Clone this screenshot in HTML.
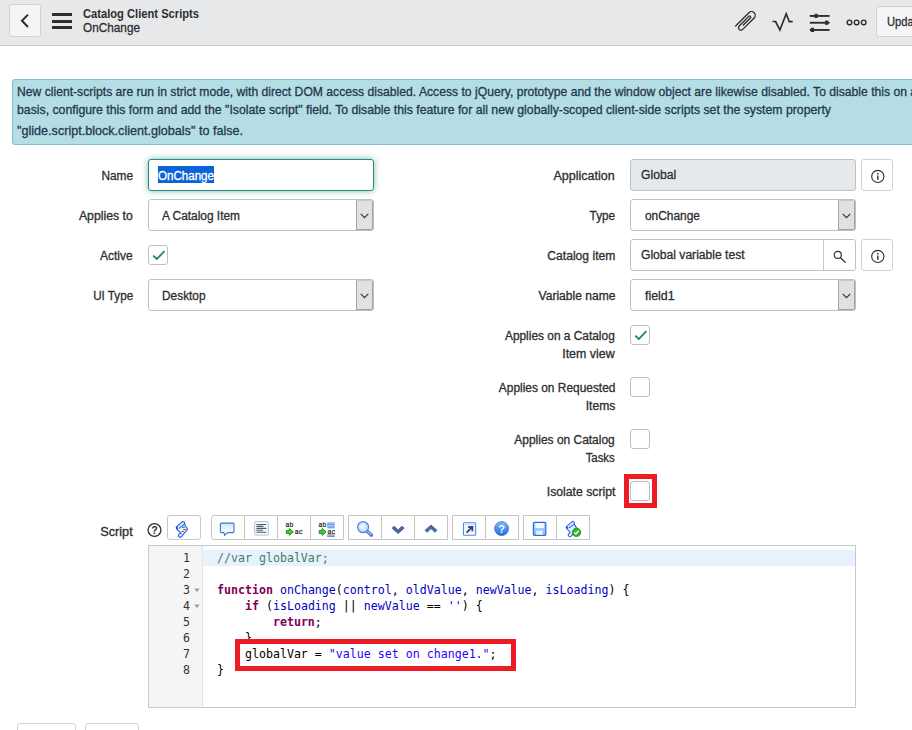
<!DOCTYPE html>
<html><head><meta charset="utf-8"><title>Catalog Client Scripts</title>
<style>
*{box-sizing:border-box;margin:0;padding:0}
html,body{width:912px;height:730px;overflow:hidden;background:#fff}
body{position:relative;font-family:"Liberation Sans",sans-serif;font-size:12px;color:#2e2e2e}
.abs{position:absolute}
.t{position:absolute;white-space:nowrap;line-height:16px;-webkit-text-stroke:0.3px currentColor}
#hdr{left:0;top:0;width:912px;height:46px;background:#e6e8ea;border-bottom:1px solid #c9cbcd}
.btn{position:absolute;background:#f4f5f7;border:1px solid #cfd1d3;border-radius:3px}
.inp{position:absolute;height:32px;background:#fff;border:1px solid #bdc0c4;border-radius:3px}
.sel .dd{position:absolute;right:0px;top:0px;width:17px;height:30px;background:#e1e1e1;border:1px solid #a3a3a3;border-top-color:#c9c9c9;border-radius:0 2px 2px 0}
.sel .dd svg{position:absolute;left:3px;top:11.5px}
.cb{position:absolute;width:20px;height:20px;background:#fff;border:1px solid #bdc0c4;border-radius:3px}
.cb svg{position:absolute;left:3px;top:4px}
.tb{position:absolute;top:515px;height:25px;border:1px solid #c6c6c6;background:#fff}
.tb i{position:absolute;top:0;width:1px;height:23px;background:#c6c6c6}
.code{position:absolute;font-family:"DejaVu Sans Mono","Liberation Mono",monospace;font-size:11.62px;line-height:16px;white-space:pre;color:#000}
.ln{position:absolute;font-family:"DejaVu Sans Mono","Liberation Mono",monospace;font-size:11.62px;line-height:16px;color:#333;width:40px;text-align:right}
.kw{color:#7f0055;font-weight:bold}.fn{color:#0000c0}.st{color:#2a00ff}.cm{color:#3f7f5f}
</style></head><body>

<div id="hdr" class="abs"></div>
<div class="btn" style="left:8.5px;top:4px;width:32px;height:32.5px"></div>
<svg class="abs" style="left:9px;top:4px" width="32" height="32"><path d="M19 10.6 L13 16.8 L19 23" fill="none" stroke="#2e2e2e" stroke-width="2"/></svg>
<div class="abs" style="left:52px;top:13px;width:20px;height:3px;background:#2e2e2e"></div>
<div class="abs" style="left:52px;top:19.5px;width:20px;height:3px;background:#2e2e2e"></div>
<div class="abs" style="left:52px;top:26px;width:20px;height:3px;background:#2e2e2e"></div>

<!-- header icons -->
<svg class="abs" style="left:733px;top:9px" width="26" height="26" viewBox="0 0 26 26"><path transform="translate(2.6,17) rotate(-45)" d="M0 0 H18.8 A3.7 3.7 0 0 1 18.8 7.4 H2.6 A2.45 2.45 0 0 1 2.6 2.5 H16.1 A1.15 1.15 0 0 1 16.1 4.8 H6.1" fill="none" stroke="#2e2e2e" stroke-width="1.35" stroke-linecap="round"/></svg>
<svg class="abs" style="left:770px;top:10px" width="26" height="24"><path d="M2.5 11.5 H5.6 L9.9 20 L16.2 3.8 L19.3 11.7 H22.7" fill="none" stroke="#2e2e2e" stroke-width="1.7" stroke-linejoin="miter"/></svg>
<svg class="abs" style="left:808px;top:10px" width="24" height="24"><g fill="#2e2e2e"><rect x="1.8" y="5" width="19.8" height="1.9"/><rect x="1.8" y="11.8" width="19.8" height="1.9"/><rect x="1.8" y="19" width="19.8" height="1.9"/><rect x="6.6" y="3.8" width="3" height="4.2"/><rect x="17" y="10.6" width="3.3" height="4.2"/><rect x="2.7" y="17.8" width="3.4" height="4.2"/></g></svg>
<svg class="abs" style="left:845px;top:16px" width="24" height="12"><g fill="none" stroke="#2e2e2e" stroke-width="1.4"><circle cx="4.5" cy="6.4" r="2.3"/><circle cx="11.6" cy="6.4" r="2.3"/><circle cx="18.7" cy="6.4" r="2.3"/></g></svg>
<div class="btn" style="left:876px;top:6px;width:60px;height:31px"></div>

<!-- info box -->
<div class="abs" style="left:12px;top:79px;width:920px;height:66px;background:#b5dde6;border:1px solid #7dc0d0;border-radius:3px"></div>

<!-- left column -->
<div class="inp" style="left:148px;top:159px;width:226px;border-color:#278b7c;box-shadow:0 0 6px rgba(39,139,124,.6)"></div>
<div class="abs" style="left:158px;top:166px;width:56px;height:17px;background:#0a64d8"></div>
<div class="inp sel" style="left:148px;top:199px;width:226px"><div class="dd"><svg width="10" height="6"><path d="M0.7 .8 L4.5 4.6 L8.3 .8" fill="none" stroke="#333" stroke-width="1.15"/></svg></div></div>
<div class="cb" style="left:148px;top:245px"><svg width="14" height="11"><path d="M1.2 5.6 L4.8 9 L12.5 1.2" fill="none" stroke="#1f8476" stroke-width="1.8"/></svg></div>
<div class="inp sel" style="left:148px;top:279px;width:226px"><div class="dd"><svg width="10" height="6"><path d="M0.7 .8 L4.5 4.6 L8.3 .8" fill="none" stroke="#333" stroke-width="1.15"/></svg></div></div>

<!-- right column -->
<div class="inp" style="left:630px;top:159px;width:226px;background:#e6e9eb"></div>
<div class="btn" style="left:861px;top:159px;width:32px;height:32px;background:#fff"></div>
<svg class="abs" style="left:869px;top:167px" width="18" height="18"><circle cx="8.8" cy="9.4" r="6.1" fill="none" stroke="#2e2e2e" stroke-width="1.15"/><rect x="8.1" y="8.5" width="1.4" height="4.3" fill="#2e2e2e"/><rect x="8.1" y="5.9" width="1.4" height="1.5" fill="#2e2e2e"/></svg>
<div class="inp sel" style="left:630px;top:199px;width:226px"><div class="dd"><svg width="10" height="6"><path d="M0.7 .8 L4.5 4.6 L8.3 .8" fill="none" stroke="#333" stroke-width="1.15"/></svg></div></div>
<div class="inp" style="left:630px;top:239px;width:226px"></div>
<div class="abs" style="left:823px;top:240px;width:1px;height:30px;background:#c9cbce"></div>
<svg class="abs" style="left:830px;top:247px" width="18" height="18"><circle cx="7.8" cy="7.9" r="3.5" fill="none" stroke="#2e2e2e" stroke-width="1.15"/><path d="M10.3 10.5 L15.6 15.6" stroke="#2e2e2e" stroke-width="1.3"/></svg>
<div class="btn" style="left:861px;top:239px;width:32px;height:32px;background:#fff"></div>
<svg class="abs" style="left:869px;top:247px" width="18" height="18"><circle cx="8.8" cy="9.4" r="6.1" fill="none" stroke="#2e2e2e" stroke-width="1.15"/><rect x="8.1" y="8.5" width="1.4" height="4.3" fill="#2e2e2e"/><rect x="8.1" y="5.9" width="1.4" height="1.5" fill="#2e2e2e"/></svg>
<div class="inp sel" style="left:630px;top:279px;width:226px"><div class="dd"><svg width="10" height="6"><path d="M0.7 .8 L4.5 4.6 L8.3 .8" fill="none" stroke="#333" stroke-width="1.15"/></svg></div></div>

<div class="cb" style="left:630px;top:325px"><svg width="14" height="11"><path d="M1.2 5.6 L4.8 9 L12.5 1.2" fill="none" stroke="#1f8476" stroke-width="1.8"/></svg></div>
<div class="cb" style="left:630px;top:377px"></div>
<div class="cb" style="left:630px;top:429px"></div>
<div class="cb" style="left:630px;top:481px"></div>
<div class="abs" style="left:624px;top:474px;width:33px;height:34px;border:5px solid #ed1c24"></div>

<!-- script toolbar -->
<svg class="abs" style="left:146px;top:522px" width="17" height="17"><circle cx="8.5" cy="8" r="6.4" fill="none" stroke="#2e2e2e" stroke-width="1.3"/><text x="8.5" y="11.6" font-family="Liberation Sans, sans-serif" font-size="10.5" font-weight="bold" text-anchor="middle" fill="#2e2e2e">?</text></svg>
<div class="btn" style="left:167px;top:515px;width:34px;height:25px;background:#fff;border-color:#c9c9c9"></div>
<div class="tb" style="left:211px;width:133px;border-radius:3px 0 0 3px"><i style="left:32px"></i><i style="left:65px"></i><i style="left:98px"></i></div>
<div class="tb" style="left:348px;width:100px"><i style="left:32px"></i><i style="left:65px"></i></div>
<div class="tb" style="left:452px;width:67px"><i style="left:32px"></i></div>
<div class="tb" style="left:523px;width:67px"><i style="left:32px"></i></div>
<svg class="abs" style="left:140px;top:510px" width="460" height="35" viewBox="140 510 460 35">
<defs>
<linearGradient id="gb" x1="0" y1="0" x2="0" y2="1"><stop offset="0" stop-color="#d6e4f7"/><stop offset="1" stop-color="#ffffff"/></linearGradient>
<radialGradient id="gm" cx="0.45" cy="0.45" r="0.6"><stop offset="0" stop-color="#ffffff"/><stop offset="1" stop-color="#a9cdf7"/></radialGradient>
<linearGradient id="gh" x1="0" y1="0" x2="0" y2="1"><stop offset="0" stop-color="#7dbbf8"/><stop offset="1" stop-color="#2367da"/></linearGradient>
<linearGradient id="gs" x1="0" y1="0" x2="0" y2="1"><stop offset="0" stop-color="#b4d4fb"/><stop offset="1" stop-color="#86b8f5"/></linearGradient>
</defs>
<!-- script scroll icon -->
<g fill="#eaf2ff" stroke="#2a62e4" stroke-width="1.15" stroke-linejoin="round">
<path d="M176.4 527 L182.8 521.4 L184.7 522.5 L184.5 524.3 L187.6 529.2 L181.9 536.2 a1.8 1.8 0 0 1 -3.3 -1.5 L180.4 532.9 L176.4 528.7 Z"/>
<path d="M178.9 528.4 L184.5 524.3" fill="none"/>
<path d="M176.4 527 L177.6 528.9" fill="none" stroke-width="1.6" stroke="#1746c8"/>
<path d="M180.4 532.9 L181.6 534.2" fill="none"/>
</g>
<path d="M182.1 527.4 h2.8 M181.1 531.5 h2.9" stroke="#1fae2e" stroke-width="1.2" fill="none"/>
<path d="M183.1 529.5 h2.8" stroke="#e8442e" stroke-width="1.2" fill="none"/>
<!-- comment -->
<path d="M221.4 523.1 H233 a1 1 0 0 1 1 1 V531.6 a1 1 0 0 1 -1 1 H227.6 L224.6 535.4 L224 532.6 H221.4 a1 1 0 0 1 -1 -1 V524.1 a1 1 0 0 1 1 -1 Z" fill="url(#gb)" stroke="#3878cc" stroke-width="1.1" stroke-linejoin="round"/>
<!-- align -->
<rect x="254.6" y="521.5" width="13.8" height="13.6" rx="1.6" fill="#f4f8ff" stroke="#a4c2f4" stroke-width="1"/>
<path d="M256.4 524.5 h9.6 M256.4 526.4 h7 M256.4 528.4 h10 M256.4 530.3 h6.6 M256.4 532.3 h9.8" stroke="#555" stroke-width="1.1"/>
<!-- replace -->
<text x="285.6" y="526.6" font-family="Liberation Mono, monospace" font-size="8" fill="#111" stroke="#111" stroke-width="0.18" textLength="8" lengthAdjust="spacingAndGlyphs">ab</text>
<path d="M286.3 530.4 h3 v-1.9 l4 3.4 l-4 3.4 v-1.9 h-3 Z" fill="#3ad43a" stroke="#128a12" stroke-width="0.9" stroke-linejoin="round"/>
<text x="294.8" y="534" font-family="Liberation Mono, monospace" font-size="8" fill="#111" stroke="#111" stroke-width="0.18" textLength="8" lengthAdjust="spacingAndGlyphs">ac</text>
<!-- replace all -->
<text x="318.6" y="526.6" font-family="Liberation Mono, monospace" font-size="8" fill="#111" stroke="#111" stroke-width="0.18" textLength="8" lengthAdjust="spacingAndGlyphs">ab</text>
<path d="M327.2 523 h7.6 M327.2 524.6 h7.6 M327.2 526.2 h7.6 M327.2 527.8 h7.6" stroke="#3b77db" stroke-width="0.9"/>
<path d="M319.2 530.4 h3 v-1.9 l4 3.4 l-4 3.4 v-1.9 h-3 Z" fill="#3ad43a" stroke="#128a12" stroke-width="0.9" stroke-linejoin="round"/>
<text x="327.6" y="534" font-family="Liberation Mono, monospace" font-size="8" fill="#111" stroke="#111" stroke-width="0.18" textLength="8" lengthAdjust="spacingAndGlyphs">ac</text>
<path d="M327.2 535 h7.6" stroke="#444" stroke-width="0.8"/>
<path d="M327.2 536.4 h7.6" stroke="#3b77db" stroke-width="0.9"/>
<!-- magnifier -->
<path d="M367.4 531.4 L371.3 535.1" stroke="#3f6fc0" stroke-width="3.4" stroke-linecap="round"/>
<path d="M367.4 531.4 L370.6 534.4" stroke="#8dbcf5" stroke-width="1.9" stroke-linecap="round"/>
<circle cx="363.1" cy="527.1" r="5.5" fill="url(#gm)" stroke="#3d86e8" stroke-width="1.2"/>
<!-- chevrons -->
<path d="M392.2 528.2 L394.1 526.2 L398.1 529.9 L402.1 526.2 L404.1 528.2 L398.1 533.5 Z" fill="#5f6670" stroke="#2a6ad6" stroke-width="1" stroke-linejoin="round"/>
<path d="M425.1 530.3 L431 525.1 L437 530.3 L435 532.3 L431 528.6 L427 532.3 Z" fill="#5f6670" stroke="#2a6ad6" stroke-width="1" stroke-linejoin="round"/>
<!-- popup -->
<rect x="463.5" y="522.7" width="12.2" height="12.6" rx="0.8" fill="#f3f7ff" stroke="#4a8ae8" stroke-width="1.1"/>
<rect x="464" y="523.2" width="11.2" height="1.8" fill="#cfe0fa"/>
<path d="M466.6 532.6 L471.6 527.6 M468.2 527 H472.4 V531.2" fill="none" stroke="#33466e" stroke-width="1.8"/>
<!-- help -->
<circle cx="501.6" cy="528.6" r="7" fill="url(#gh)" stroke="#2f72dd" stroke-width="0.8"/>
<text x="501.6" y="532.6" font-family="Liberation Sans, sans-serif" font-weight="bold" font-size="11" fill="#ffffff" text-anchor="middle">?</text>
<!-- save -->
<path d="M534.6 522.4 H544.6 a1.2 1.2 0 0 1 1.2 1.2 V534.2 a1.2 1.2 0 0 1 -1.2 1.2 H534.6 a1.2 1.2 0 0 1 -1.2 -1.2 V523.6 a1.2 1.2 0 0 1 1.2 -1.2 Z" fill="url(#gs)" stroke="#2a6adf" stroke-width="1.2"/>
<rect x="535.4" y="523" width="8.4" height="5" fill="#f4f9ff"/>
<rect x="536.2" y="530.6" width="6.6" height="4.2" fill="#e6f0fd"/>
<!-- script check -->
<g fill="#eaf2ff" stroke="#2a62e4" stroke-width="1.1" stroke-linejoin="round">
<path d="M566.4 526.6 L572.6 521.3 L574.4 522.4 L574.2 524.1 L577 528.6 L571.6 535.6 a1.7 1.7 0 0 1 -3.2 -1.4 L570.2 532.4 L566.4 528.2 Z"/>
<path d="M568.8 528 L574.2 524.1" fill="none"/>
<path d="M566.4 526.6 L567.6 528.4" fill="none" stroke-width="1.5" stroke="#1746c8"/>
</g>
<circle cx="576.5" cy="532.3" r="4.2" fill="#2eb82e" stroke="#128a12" stroke-width="0.8"/>
<path d="M574.3 532.4 L575.9 534 L578.7 530.6" fill="none" stroke="#fff" stroke-width="1.3"/>
</svg>

<!-- editor -->
<div class="abs" style="left:148px;top:545px;width:708px;height:163px;border:1px solid #c8c8c8;background:#fff"></div>
<div class="abs" style="left:149px;top:546px;width:54px;height:161px;background:#f5f5f5;border-right:1px solid #e4e4e4"></div>
<div class="abs" style="left:203px;top:550px;width:652px;height:16px;background:#e8f2fe"></div>
<div class="ln" style="left:150px;top:550px">1</div>
<div class="code" style="left:217px;top:550px"><span class="cm">//var globalVar;</span></div>
<div class="ln" style="left:150px;top:566px">2</div>
<div class="ln" style="left:150px;top:582px">3</div>
<div class="code" style="left:217px;top:582px"><span class="kw">function</span> <span class="fn">onChange</span>(<span class="fn">control</span>, <span class="fn">oldValue</span>, <span class="fn">newValue</span>, <span class="fn">isLoading</span>) {</div>
<div class="ln" style="left:150px;top:598px">4</div>
<div class="code" style="left:217px;top:598px">    <span class="kw">if</span> (<span class="fn">isLoading</span> || <span class="fn">newValue</span> == <span class="st">''</span>) {</div>
<div class="ln" style="left:150px;top:614px">5</div>
<div class="code" style="left:217px;top:614px">        <span class="kw">return</span>;</div>
<div class="ln" style="left:150px;top:630px">6</div>
<div class="code" style="left:217px;top:630px">    }</div>
<div class="ln" style="left:150px;top:646px">7</div>
<div class="code" style="left:217px;top:646px">    globalVar = <span class="st">"value set on change1."</span>;</div>
<div class="ln" style="left:150px;top:662px">8</div>
<div class="code" style="left:217px;top:662px">}</div>
<svg class="abs" style="left:194px;top:588px" width="6" height="5"><path d="M0.5 0.5 H5.5 L3 4.2 Z" fill="#9a9a9a"/></svg>
<svg class="abs" style="left:194px;top:604px" width="6" height="5"><path d="M0.5 0.5 H5.5 L3 4.2 Z" fill="#9a9a9a"/></svg>
<div class="abs" style="left:235px;top:639px;width:281px;height:32px;border:5px solid #ed1c24"></div>

<div class="btn" style="left:16.5px;top:722.5px;width:59.5px;height:30px;background:#fff"></div>
<div class="btn" style="left:84.5px;top:722.5px;width:54px;height:30px;background:#fff"></div>
<div class="t" id="t0" style="top:5.5px;font-size:13px;left:83px;transform-origin:0 50%;transform:scaleX(0.8588);font-weight:bold;-webkit-text-stroke:0">Catalog Client Scripts</div>
<div class="t" id="t1" style="top:19.7px;font-size:13px;left:83px;transform-origin:0 50%;transform:scaleX(0.9063);">OnChange</div>
<div class="t" id="t2" style="top:13.5px;font-size:13px;left:887.4px;transform-origin:0 50%;transform:scaleX(0.8587);">Update</div>
<div class="t" id="t3" style="top:83.5px;font-size:13px;left:17px;transform-origin:0 50%;transform:scaleX(0.9350);color:#22384c">New client-scripts are run in strict mode, with direct DOM access disabled. Access to jQuery, prototype and the window object are likewise disabled. To disable this on a per-script</div>
<div class="t" id="t4" style="top:101.5px;font-size:13px;left:17px;transform-origin:0 50%;transform:scaleX(0.9439);color:#22384c">basis, configure this form and add the "Isolate script" field. To disable this feature for all new globally-scoped client-side scripts set the system property</div>
<div class="t" id="t5" style="top:123px;font-size:13px;left:17px;transform-origin:0 50%;transform:scaleX(0.9690);color:#22384c">"glide.script.block.client.globals" to false.</div>
<div class="t" id="t6" style="top:167.5px;font-size:12px;right:779px;transform-origin:100% 50%;transform:scaleX(0.9870);">Name</div>
<div class="t" id="t7" style="top:167.5px;font-size:12px;left:158px;transform-origin:0 50%;transform:scaleX(0.9647);color:#fff">OnChange</div>
<div class="t" id="t8" style="top:207.5px;font-size:12px;right:779px;transform-origin:100% 50%;transform:scaleX(1.0208);">Applies to</div>
<div class="t" id="t9" style="top:207.5px;font-size:12px;left:161.8px;transform-origin:0 50%;transform:scaleX(0.9909);">A Catalog Item</div>
<div class="t" id="t10" style="top:247.5px;font-size:12px;right:779px;transform-origin:100% 50%;transform:scaleX(1.0004);">Active</div>
<div class="t" id="t11" style="top:287.5px;font-size:12px;right:779px;transform-origin:100% 50%;transform:scaleX(0.9723);">UI Type</div>
<div class="t" id="t12" style="top:287.5px;font-size:12px;left:162.2px;transform-origin:0 50%;transform:scaleX(0.9902);">Desktop</div>
<div class="t" id="t13" style="top:167.5px;font-size:12px;right:297px;transform-origin:100% 50%;transform:scaleX(1.0423);">Application</div>
<div class="t" id="t14" style="top:167px;font-size:12px;left:640.5px;transform-origin:0 50%;transform:scaleX(1.0148);">Global</div>
<div class="t" id="t15" style="top:207.5px;font-size:12px;right:297px;transform-origin:100% 50%;transform:scaleX(0.9763);">Type</div>
<div class="t" id="t16" style="top:207.5px;font-size:12px;left:644.5px;transform-origin:0 50%;transform:scaleX(0.9911);">onChange</div>
<div class="t" id="t17" style="top:247.5px;font-size:12px;right:297px;transform-origin:100% 50%;transform:scaleX(1.0108);">Catalog item</div>
<div class="t" id="t18" style="top:246.5px;font-size:12px;left:640.5px;transform-origin:0 50%;transform:scaleX(1.0084);">Global variable test</div>
<div class="t" id="t19" style="top:287.5px;font-size:12px;right:297px;transform-origin:100% 50%;transform:scaleX(1.0065);">Variable name</div>
<div class="t" id="t20" style="top:287.5px;font-size:12px;left:644.5px;transform-origin:0 50%;transform:scaleX(1.0283);">field1</div>
<div class="t" id="t21" style="top:328px;font-size:12px;right:297px;transform-origin:100% 50%;transform:scaleX(0.9914);">Applies on a Catalog</div>
<div class="t" id="t22" style="top:346px;font-size:12px;right:297px;transform-origin:100% 50%;transform:scaleX(1.0358);">Item view</div>
<div class="t" id="t23" style="top:380px;font-size:12px;right:297px;transform-origin:100% 50%;transform:scaleX(0.9930);">Applies on Requested</div>
<div class="t" id="t24" style="top:398px;font-size:12px;right:297px;transform-origin:100% 50%;transform:scaleX(1.0121);">Items</div>
<div class="t" id="t25" style="top:431.5px;font-size:12px;right:297px;transform-origin:100% 50%;transform:scaleX(0.9967);">Applies on Catalog</div>
<div class="t" id="t26" style="top:449.5px;font-size:12px;right:297px;transform-origin:100% 50%;transform:scaleX(0.9450);">Tasks</div>
<div class="t" id="t27" style="top:483.5px;font-size:12px;right:297px;transform-origin:100% 50%;transform:scaleX(1.0184);">Isolate script</div>
<div class="t" id="t28" style="top:523.5px;font-size:12px;right:779px;transform-origin:100% 50%;transform:scaleX(1.0591);">Script</div>
<div class="t" id="t29" style="top:732px;font-size:12px;left:27px;transform-origin:0 50%;transform:scaleX(1.0335);">Update</div>
<div class="t" id="t30" style="top:732px;font-size:12px;left:95px;transform-origin:0 50%;transform:scaleX(1.0378);">Delete</div>
</body></html>
